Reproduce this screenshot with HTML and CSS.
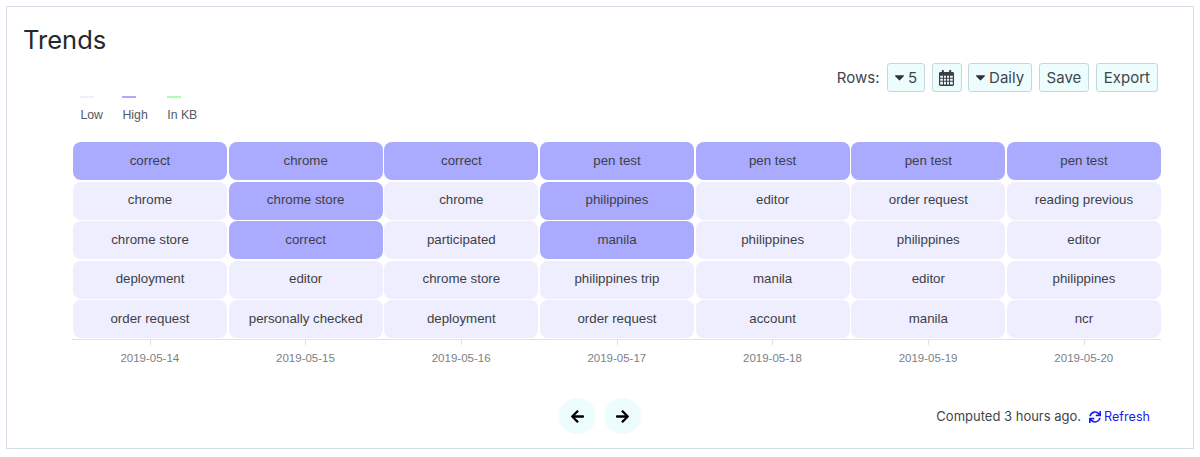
FILE: index.html
```html
<!DOCTYPE html>
<html lang="en">
<head>
<meta charset="utf-8">
<title>Trends</title>
<link rel="stylesheet" href="styles.css">
</head>
<body>
<main class="card">
  <h1 class="title">Trends</h1>
  <div class="toolbar">
    <span class="rows-label">Rows:</span>
    <button class="btn"><svg class="caret" viewBox="0 0 10 6"><path d="M0.6 0h8.8c.5 0 .8.6.4 1L5.4 5.6c-.2.3-.6.3-.8 0L.2 1C-.2.6.1 0 .6 0z"/></svg>5</button>
    <button class="btn btn-icon"><svg class="cal" viewBox="0 0 16 17"><path fill-rule="evenodd" d="M3.5 0h1.2c.3 0 .5.2.5.5V2h5.6V.5c0-.3.2-.5.5-.5h1.2c.3 0 .5.2.5.5V2h1.5c.8 0 1.5.7 1.5 1.5v12c0 .8-.7 1.5-1.5 1.5h-13C.7 17 0 16.300 0 15.500v-12C0 2.700.7 2 1.500 2H3V.5c0-.3.2-.5.5-.5zM1.300 6v2.200h2.900V6zm4 0v2.200h2.100V6zm3.300 0v2.200h2.100V6zm3.200 0v2.200h2.900V6zM1.300 9.300v2.200h2.900V9.300zm4 0v2.200h2.100V9.300zm3.300 0v2.200h2.100V9.300zm3.200 0v2.200h2.900V9.300zM1.300 12.600v2.900h2.900v-2.900zm4 0v2.900h2.100v-2.900zm3.300 0v2.900h2.100v-2.900zm3.200 0v2.900h2.900v-2.900z"/></svg></button>
    <button class="btn"><svg class="caret" viewBox="0 0 10 6"><path d="M0.6 0h8.8c.5 0 .8.6.4 1L5.4 5.6c-.2.3-.6.3-.8 0L.2 1C-.2.6.1 0 .6 0z"/></svg>Daily</button>
    <button class="btn">Save</button>
    <button class="btn">Export</button>
  </div>
  <div class="legend">
    <div class="legend-item"><i class="swatch swatch-low"></i>Low</div>
    <div class="legend-item"><i class="swatch swatch-high"></i>High</div>
    <div class="legend-item"><i class="swatch swatch-kb"></i>In KB</div>
  </div>
  <div class="heatmap">
    <div class="cell high">correct</div><div class="cell high">chrome</div><div class="cell high">correct</div><div class="cell high">pen test</div><div class="cell high">pen test</div><div class="cell high">pen test</div><div class="cell high">pen test</div>
    <div class="cell">chrome</div><div class="cell high">chrome store</div><div class="cell">chrome</div><div class="cell high">philippines</div><div class="cell">editor</div><div class="cell">order request</div><div class="cell">reading previous</div>
    <div class="cell">chrome store</div><div class="cell high">correct</div><div class="cell">participated</div><div class="cell high">manila</div><div class="cell">philippines</div><div class="cell">philippines</div><div class="cell">editor</div>
    <div class="cell">deployment</div><div class="cell">editor</div><div class="cell">chrome store</div><div class="cell">philippines trip</div><div class="cell">manila</div><div class="cell">editor</div><div class="cell">philippines</div>
    <div class="cell">order request</div><div class="cell">personally checked</div><div class="cell">deployment</div><div class="cell">order request</div><div class="cell">account</div><div class="cell">manila</div><div class="cell">ncr</div>
  </div>
  <div class="axis">
    <div class="tick">2019-05-14</div><div class="tick">2019-05-15</div><div class="tick">2019-05-16</div><div class="tick">2019-05-17</div><div class="tick">2019-05-18</div><div class="tick">2019-05-19</div><div class="tick">2019-05-20</div>
  </div>
  <div class="footer">
    <div class="pager">
      <button class="round"><svg viewBox="0 0 448 512"><path d="M257.500 445.100l-22.200 22.200c-9.400 9.400-24.600 9.400-33.900 0L7 273c-9.400-9.400-9.400-24.600 0-33.900L201.400 44.700c9.400-9.400 24.600-9.400 33.900 0l22.200 22.200c9.500 9.500 9.300 25-.4 34.300L136.600 216H424c13.300 0 24 10.700 24 24v32c0 13.300-10.700 24-24 24H136.600l120.500 114.800c9.800 9.300 10 24.800.4 34.300z"/></svg></button>
      <button class="round"><svg viewBox="0 0 448 512"><path d="M190.500 66.900l22.200-22.200c9.400-9.400 24.600-9.400 33.900 0L441 239c9.400 9.400 9.400 24.600 0 33.900L246.600 467.300c-9.400 9.400-24.600 9.400-33.900 0l-22.200-22.200c-9.500-9.500-9.300-25 .4-34.300L311.400 296H24c-13.300 0-24-10.700-24-24v-32c0-13.300 10.700-24 24-24h287.400L190.900 101.200c-9.800-9.300-10-24.800-.4-34.300z"/></svg></button>
    </div>
    <div class="status">Computed 3 hours ago.<a class="refresh" href="#"><svg viewBox="0 0 512 512"><path d="M440.650 12.570l4 82.770A247.160 247.160 0 0 0 255.830 8C134.730 8 33.910 94.920 12.290 209.820A12 12 0 0 0 24.090 224h49.050a12 12 0 0 0 11.670-9.260 175.910 175.910 0 0 1 317-56.940l-101.460-4.860a12 12 0 0 0-12.570 12v47.410a12 12 0 0 0 12 12H500a12 12 0 0 0 12-12V12a12 12 0 0 0-12-12h-47.370a12 12 0 0 0-11.980 12.570zM255.830 432a175.610 175.610 0 0 1-146-77.800l101.800 4.870a12 12 0 0 0 12.570-12v-47.400a12 12 0 0 0-12-12H12a12 12 0 0 0-12 12V500a12 12 0 0 0 12 12h47.350a12 12 0 0 0 12-12.600l-4.150-82.570A247.170 247.170 0 0 0 255.830 504c121.110 0 221.930-86.920 243.550-201.820a12 12 0 0 0-11.800-14.180h-49.050a12 12 0 0 0-11.670 9.260A175.860 175.860 0 0 1 255.830 432z"/></svg>Refresh</a></div>
  </div>
</main>
</body>
</html>
```
FILE: styles.css
```css
* { box-sizing: border-box; }
html, body { margin: 0; height: 457px; background: #fff; overflow: hidden; }
body { padding: 6px; font-family: Inter, "Liberation Sans", sans-serif; color: #343a40; }
.card {
  width: 1188px;
  height: 443px;
  border: 1px solid #d5dde6;
  background: #fff;
  padding: 16px 35px 0 16px;
}
.title { margin: 0; font-size: 25.5px; line-height: 34px; font-weight: 400; color: #24292e; }
.toolbar { display: flex; align-items: center; justify-content: flex-end; gap: 6.5px; height: 29px; margin-top: 6px; }
.rows-label { font-size: 15px; color: #3f454c; margin-right: 1px; }
.btn {
  display: flex; align-items: center; gap: 4px;
  height: 29px; padding: 0 7px;
  font: 15px Inter, "Liberation Sans", sans-serif; color: #3f454c;
  background: #edfdfd; border: 1px solid #c4d8dc; border-radius: 3px;
}
.btn-icon { width: 30px; justify-content: center; padding: 0; }
.caret { width: 9px; height: 6px; fill: #2f343a; }
.cal { width: 15px; height: 16px; fill: #3a3f45; }
.legend { display: flex; margin: 4px 0 0 57.400px; font: 12.3px "Liberation Sans", sans-serif; color: #55595f; height: 46px; }
.legend-item { display: flex; flex-direction: column; gap: 10px; margin-right: 19.5px; line-height: 14px; }
.swatch { display: block; width: 14px; height: 2px; }
.swatch-low { background: #eeeeff; }
.swatch-high { background: #aaaaff; }
.swatch-kb { background: #aaffaa; }
.heatmap {
  display: grid;
  grid-template-columns: repeat(7, 154px);
  grid-auto-rows: 38px;
  column-gap: 1.67px; row-gap: 1.6px;
  margin-left: 50px;
}
.cell {
  display: flex; align-items: center; justify-content: center;
  padding-bottom: 2px;
  background: #eeeeff; border-radius: 8px;
  font: 13.3px "Liberation Sans", sans-serif; color: #3c3f46;
}
.cell.high { background: #aaaaff; }
.axis {
  display: grid;
  grid-template-columns: repeat(7, 155.67px);
  width: 1089px;
  margin: 1px 0 0 49px;
  border-top: 1px solid #e2e2e2;
}
.tick {
  position: relative;
  padding-top: 11px;
  text-align: center;
  font: 11.5px/14px "Liberation Sans", sans-serif; color: #7b7f85;
}
.tick::before {
  content: ""; position: absolute; top: 0; left: 50%;
  width: 1px; height: 5px; background: #e2e2e2;
}
.footer { position: relative; display: flex; align-items: center; justify-content: flex-end; height: 37px; margin-top: 33px; }
.pager { position: absolute; left: 536px; top: 0; display: flex; gap: 8px; }
.round {
  display: flex; align-items: center; justify-content: center;
  width: 37px; height: 36px; padding: 0;
  background: #edfdfd; border: 0; border-radius: 50%;
}
.round svg { width: 13px; height: 15px; fill: #000; }
.status { font-size: 13px; color: #3f454c; margin-right: 8px; padding-bottom: 2px; }
.refresh { margin-left: 8px; color: #1a1aee; text-decoration: none; font-size: 12.6px; }
.refresh svg { width: 12px; height: 12px; fill: #1a1aee; margin-right: 3px; vertical-align: -2px; }
```
